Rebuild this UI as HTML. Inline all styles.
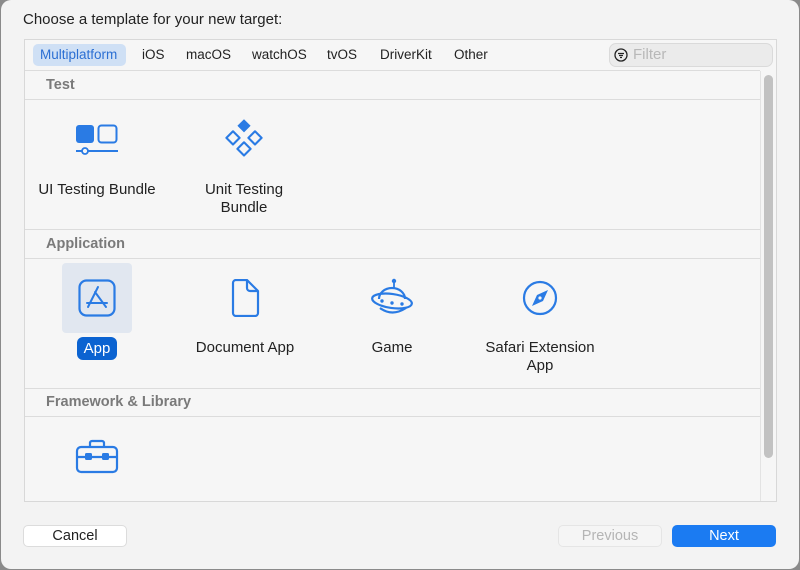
<!DOCTYPE html><html><head><style>
*{margin:0;padding:0;box-sizing:border-box}
body{width:800px;height:570px;background:#8a8a8a;font-family:"Liberation Sans",sans-serif;overflow:hidden;position:relative}
.win{position:absolute;left:1px;top:0;width:798px;height:569px;background:#f3f3f3;border-radius:10px}
.abs{position:absolute}
.title{left:22px;top:11px;font-size:15px;color:#222}
.panel{left:23px;top:39px;width:753px;height:463px;border:1px solid #d8d8d8;background:#f6f6f6}
.tab{top:47px;font-size:13.5px;color:#222}
.line{left:24px;height:1px;background:#dcdcdc;width:735px}
.hdr{left:45px;font-size:14.5px;font-weight:bold;color:#7a7a7a}
.lbl{font-size:15px;color:#222;text-align:center;width:170px;line-height:18px}
.btn{top:525px;width:104px;height:22px;border-radius:5px;font-size:14.5px;text-align:center;line-height:22px}
svg{position:absolute}
</style></head><body><div class="win">
<div class="abs title">Choose a template for your new target:</div>
<div class="abs panel"></div>
<div class="abs" style="left:32px;top:44px;width:93px;height:22px;background:#cfe0f5;border-radius:5px"></div>
<div class="abs tab" style="left:39px;color:#2b6fd3">Multiplatform</div>
<div class="abs tab" style="left:141px">iOS</div>
<div class="abs tab" style="left:185px">macOS</div>
<div class="abs tab" style="left:251px">watchOS</div>
<div class="abs tab" style="left:326px">tvOS</div>
<div class="abs tab" style="left:379px">DriverKit</div>
<div class="abs tab" style="left:453px">Other</div>
<div class="abs" style="left:608px;top:43px;width:164px;height:24px;background:#ebebeb;border:1px solid #dadada;border-radius:7px"></div>
<svg style="left:613px;top:48px" width="14" height="14" viewBox="0 0 14 14"><circle cx="7" cy="7" r="6" fill="none" stroke="#222" stroke-width="1.3"/><path d="M4 5.5h6M5 7.5h4M6 9.5h2" stroke="#222" stroke-width="1.2"/></svg>
<div class="abs" style="left:632px;top:46px;font-size:15px;color:#b8b8b8">Filter</div>
<div class="abs line" style="top:70px"></div>
<div class="abs" style="left:759px;top:71px;width:16px;height:430px;background:#f6f6f6;border-left:1px solid #e3e3e3"></div>
<div class="abs" style="left:763px;top:75px;width:9px;height:383px;background:#c2c2c2;border-radius:5px"></div>
<div class="abs hdr" style="top:77px">Test</div>
<div class="abs line" style="top:99px"></div>
<div class="abs line" style="top:229px"></div>
<div class="abs hdr" style="top:236px">Application</div>
<div class="abs line" style="top:258px"></div>
<div class="abs line" style="top:388px"></div>
<div class="abs hdr" style="top:394px">Framework &amp; Library</div>
<div class="abs line" style="top:416px"></div>
<svg style="left:73px;top:123px" width="46" height="32" viewBox="0 0 46 32"><rect x="2" y="2" width="18" height="18" rx="3" fill="#2a7be4"/><rect x="24.5" y="2.5" width="18" height="17" rx="3" fill="none" stroke="#2a7be4" stroke-width="2"/><path d="M2 28h6M14 28h30" stroke="#2a7be4" stroke-width="2"/><circle cx="11" cy="28" r="3" fill="none" stroke="#2a7be4" stroke-width="1.8"/></svg>
<div class="abs lbl" style="left:11px;top:181px">UI Testing Bundle</div>
<svg style="left:221px;top:117px" width="44" height="44" viewBox="0 0 40 40"><path d="M20 2l6 6-6 6-6-6z" fill="#2a7be4"/><path d="M10 13l6 6-6 6-6-6zM30 13l6 6-6 6-6-6zM20 23l6 6-6 6-6-6z" fill="none" stroke="#2a7be4" stroke-width="1.9" stroke-linejoin="round"/></svg>
<div class="abs lbl" style="left:158px;top:181px">Unit Testing<br>Bundle</div>
<div class="abs" style="left:61px;top:263px;width:70px;height:70px;background:#e1e7f0;border-radius:4px"></div>
<svg style="left:77px;top:279px" width="38" height="38" viewBox="0 0 38 38"><rect x="1.5" y="1.5" width="35" height="35" rx="7" fill="none" stroke="#2a7be4" stroke-width="2.2"/><path d="M20 8L10 28M17 13l11 15M9 24h20" stroke="#2a7be4" stroke-width="2" stroke-linecap="round"/></svg>
<div class="abs" style="left:76px;top:337px;width:40px;height:23px;background:#0b63d1;border-radius:6px;color:#fff;font-size:15px;text-align:center;line-height:23px">App</div>
<svg style="left:229px;top:279px" width="30" height="38" viewBox="0 0 30 38"><path d="M3 4a3 3 0 013-3h11l11 11v22a3 3 0 01-3 3H6a3 3 0 01-3-3z" fill="none" stroke="#2a7be4" stroke-width="2.2" stroke-linejoin="round"/><path d="M17 1v8a3 3 0 003 3h8" fill="none" stroke="#2a7be4" stroke-width="2.2"/></svg>
<div class="abs lbl" style="left:159px;top:339px">Document App</div>
<svg style="left:369px;top:278px" width="44" height="40" viewBox="0 0 44 40"><circle cx="24" cy="3" r="2.2" fill="#2a7be4"/><path d="M24 5v6" stroke="#2a7be4" stroke-width="1.8"/><path d="M9 21a13 11 0 0126 0" fill="none" stroke="#2a7be4" stroke-width="2.2"/><ellipse cx="22" cy="23" rx="20" ry="7" transform="rotate(8 22 23)" fill="none" stroke="#2a7be4" stroke-width="2.2"/><path d="M10 30q12 9 26 0" fill="none" stroke="#2a7be4" stroke-width="2.2"/><circle cx="12" cy="23" r="1.7" fill="#2a7be4"/><circle cx="22" cy="25" r="1.7" fill="#2a7be4"/><circle cx="32" cy="26" r="1.7" fill="#2a7be4"/></svg>
<div class="abs lbl" style="left:306px;top:339px">Game</div>
<svg style="left:521px;top:280px" width="36" height="36" viewBox="0 0 36 36"><circle cx="18" cy="18" r="16" fill="none" stroke="#2a7be4" stroke-width="2.2"/><path d="M26 10l-5 11-11 5 5-11z" fill="#2a7be4"/><circle cx="18" cy="18" r="1.6" fill="#f6f6f6"/></svg>
<div class="abs lbl" style="left:454px;top:339px">Safari Extension<br>App</div>
<svg style="left:74px;top:439px" width="44" height="36" viewBox="0 0 44 36"><path d="M15 8V4a2 2 0 012-2h10a2 2 0 012 2v4" fill="none" stroke="#2a7be4" stroke-width="2.2"/><rect x="2" y="8" width="40" height="25" rx="4" fill="none" stroke="#2a7be4" stroke-width="2.2"/><path d="M2 18h40" stroke="#2a7be4" stroke-width="2.2"/><rect x="10" y="14" width="7" height="7" rx="1.5" fill="#2a7be4"/><rect x="27" y="14" width="7" height="7" rx="1.5" fill="#2a7be4"/></svg>
<div class="abs btn" style="left:22px;background:#fff;border:1px solid #dcdcdc;color:#222;line-height:20px">Cancel</div>
<div class="abs btn" style="left:557px;background:#f5f5f5;border:1px solid #e5e5e5;color:#b5b5b5;line-height:20px">Previous</div>
<div class="abs btn" style="left:671px;background:#1b7bf2;color:#fff">Next</div>
</div></body></html>
